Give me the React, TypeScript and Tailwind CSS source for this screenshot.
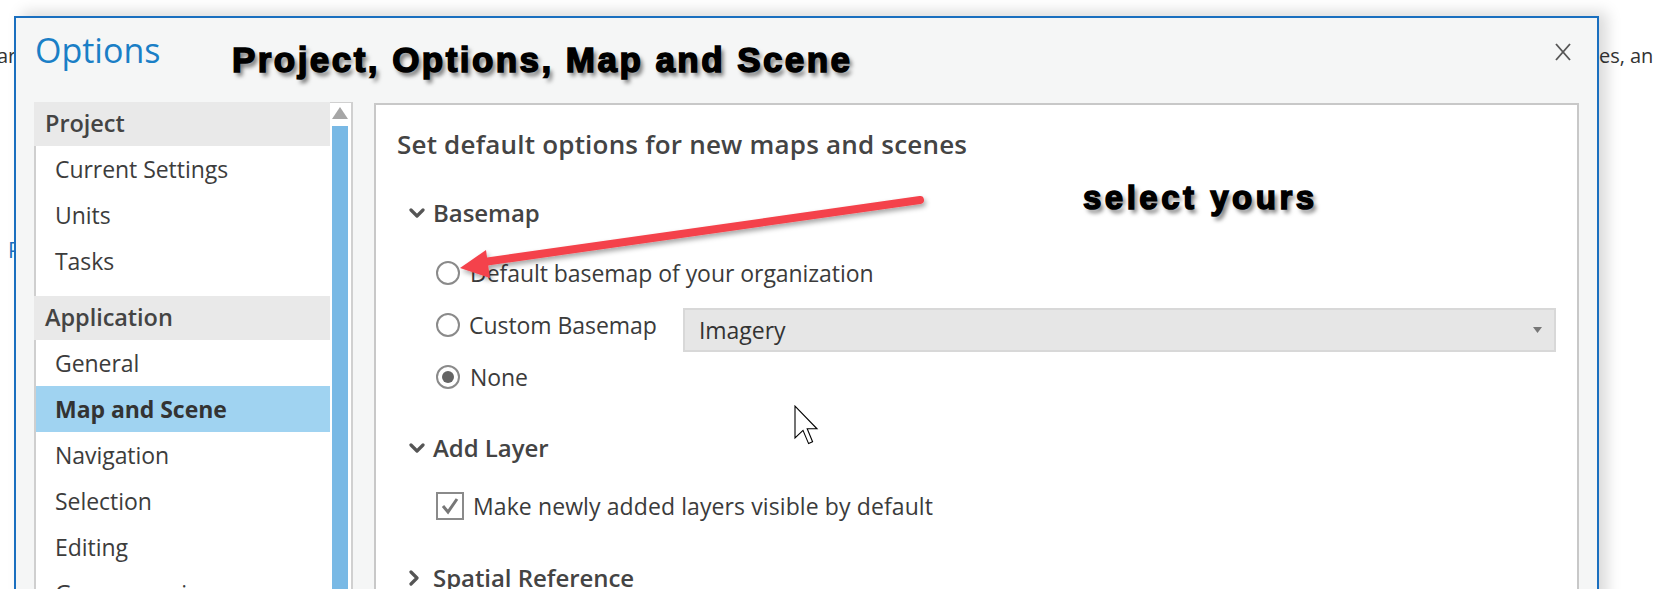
import React from "react";

function ChevronDown() {
  return (
    <svg width="16" height="10" viewBox="0 0 16 10" className="shrink-0">
      <polyline points="2,2 8,8 14,2" fill="none" stroke="#555" strokeWidth="3.2" strokeLinecap="round" strokeLinejoin="round" />
    </svg>
  );
}

function ChevronRight() {
  return (
    <svg width="16" height="16" viewBox="0 0 16 16" className="shrink-0">
      <polyline points="2,2 8,8 2,14" fill="none" stroke="#555" strokeWidth="3.2" strokeLinecap="round" strokeLinejoin="round" />
    </svg>
  );
}

function Radio({ checked }: { checked?: boolean }) {
  return (
    <span className="w-[24px] h-[24px] rounded-full border-2 border-[#8a8a8a] bg-white flex items-center justify-center shrink-0">
      {checked && <span className="w-[12px] h-[12px] rounded-full bg-[#646464]" />}
    </span>
  );
}

function NavHeader({ children }: { children: React.ReactNode }) {
  return (
    <div className="h-[44px] flex items-center pl-[11px] bg-[#e9e9e9] text-[23.5px] font-semibold text-[#444]">
      {children}
    </div>
  );
}

function NavItem({ children, active }: { children: React.ReactNode; active?: boolean }) {
  return (
    <div
      className={
        active
          ? "h-[46px] flex items-center pl-[19px] bg-[#a0d3f1] font-bold text-[#333]"
          : "h-[46px] flex items-center pl-[19px] text-[#3c3c3c]"
      }
    >
      {children}
    </div>
  );
}

export default function App() {
  return (
    <div className="relative w-[1657px] h-[589px] overflow-hidden bg-white font-['Open_Sans','Noto_Sans',sans-serif] text-[23px] tracking-[-0.05px] text-[#3b3b3b]">
      {/* underlying page */}
      <div className="flex flex-col">
        <div className="flex justify-between pt-[42px] text-[20px] leading-[28px] text-[#333]">
          <span className="-ml-[3px]">ar</span>
          <span className="w-[58px] overflow-hidden whitespace-nowrap">es, an</span>
        </div>
        <div className="pt-[166px] pl-[8px] text-[21px] leading-[28px] text-[#1a6fc0]">P</div>
      </div>

      {/* dialog */}
      <div className="absolute left-[14px] top-[16px] w-[1585px] h-[620px] border-2 border-[#1a6fbf] bg-[#f5f6f6] shadow-[8px_-4px_14px_rgba(0,0,0,0.15)] flex flex-col">
        <div className="h-[84px] flex items-start justify-between pl-[19px] pr-[24px] shrink-0">
          <div className="pt-[9px] text-[34px] leading-[46px] tracking-normal text-[#1a7fc6]">Options</div>
          <svg width="20" height="18" viewBox="0 0 20 18" className="mt-[25px]">
            <line x1="3" y1="1" x2="17" y2="17" stroke="#555" strokeWidth="1.8" />
            <line x1="17" y1="1" x2="3" y2="17" stroke="#555" strokeWidth="1.8" />
          </svg>
        </div>

        <div className="flex flex-1 pl-[18px] pr-[18px] gap-[21px]">
          {/* navigation list */}
          <div className="w-[319px] flex shrink-0">
            <div className="w-[296px] flex flex-col">
              <NavHeader>Project</NavHeader>
              <div className="border-l-2 border-[#cfcfcf] bg-white pb-[12px]">
                <NavItem>Current Settings</NavItem>
                <NavItem>Units</NavItem>
                <NavItem>Tasks</NavItem>
              </div>
              <NavHeader>Application</NavHeader>
              <div className="border-l-2 border-[#cfcfcf] bg-white flex-1">
                <NavItem>General</NavItem>
                <NavItem active>Map and Scene</NavItem>
                <NavItem>Navigation</NavItem>
                <NavItem>Selection</NavItem>
                <NavItem>Editing</NavItem>
                <NavItem>Geoprocessing</NavItem>
              </div>
            </div>
            <div className="w-[23px] bg-white border-t border-r-2 border-[#d0d0d0] flex flex-col pl-[2px] pr-[3px] pt-[4px]">
              <svg width="16" height="12" viewBox="0 0 16 12">
                <polygon points="8,0 16,12 0,12" fill="#a6a6a6" />
              </svg>
              <div className="mt-[7px] flex-1 bg-[#79b9e5]" />
            </div>
          </div>

          {/* content panel */}
          <div className="flex-1 mt-[1px] border-2 border-[#c8c8c8] bg-white pl-[21px] pt-[21px]">
            <div className="h-[36px] flex items-center text-[26px] font-semibold tracking-[0.2px] text-[#444]">
              Set default options for new maps and scenes
            </div>

            <div className="mt-[33px] h-[36px] flex items-center pl-[12px] gap-[8px] text-[24px] font-semibold text-[#444]">
              <ChevronDown />
              Basemap
            </div>

            <div className="mt-[16px] pl-[39px] flex flex-col">
              <div className="h-[52px] flex items-center gap-[10px]">
                <Radio />
                <span>Default basemap of your organization</span>
              </div>
              <div className="h-[52px] flex items-center">
                <div className="w-[247px] flex items-center gap-[9px] shrink-0">
                  <Radio />
                  <span>Custom Basemap</span>
                </div>
                <div className="w-[873px] h-[44px] mt-[10px] border-2 border-[#d8d8d8] bg-[#e6e6e6] flex items-center justify-between pl-[14px] pr-[12px] text-[#333]">
                  <span>Imagery</span>
                  <svg width="9" height="6" viewBox="0 0 9 6">
                    <polygon points="0,0 9,0 4.5,6" fill="#777" />
                  </svg>
                </div>
              </div>
              <div className="h-[52px] flex items-center gap-[10px]">
                <Radio checked />
                <span>None</span>
              </div>
            </div>

            <div className="mt-[27px] h-[36px] flex items-center pl-[12px] gap-[8px] text-[24px] font-semibold text-[#444]">
              <ChevronDown />
              Add Layer
            </div>

            <div className="mt-[14px] pl-[39px] h-[52px] flex items-center gap-[9px]">
              <span className="w-[28px] h-[28px] border-2 border-[#8a8a8a] bg-white flex items-center justify-center shrink-0">
                <svg width="20" height="18" viewBox="0 0 20 18">
                  <polyline points="3,9 8,15 17,2" fill="none" stroke="#777" strokeWidth="3" strokeLinejoin="miter" />
                </svg>
              </span>
              <span className="tracking-[0.1px]">Make newly added layers visible by default</span>
            </div>

            <div className="mt-[28px] h-[36px] flex items-center pl-[12px] gap-[8px] text-[24px] font-semibold text-[#444]">
              <ChevronRight />
              Spatial Reference
            </div>
          </div>
        </div>
      </div>

      {/* annotations */}
      <div className="absolute left-[232px] top-[38px] whitespace-nowrap font-['Liberation_Sans',Arial,sans-serif] text-[35px] leading-[44px] font-bold tracking-[2.45px] text-black [-webkit-text-stroke:1.5px_black] [text-shadow:3px_4px_4px_rgba(0,0,0,0.55)]">
        Project, Options, Map and Scene
      </div>
      <div className="absolute left-[1083px] top-[178px] whitespace-nowrap font-['Liberation_Sans',Arial,sans-serif] text-[33px] leading-[40px] font-bold tracking-[3.5px] text-black [-webkit-text-stroke:1.5px_black] [text-shadow:3px_4px_4px_rgba(0,0,0,0.55)]">
        select yours
      </div>

      <svg className="absolute left-0 top-0 pointer-events-none" width="1657" height="589" viewBox="0 0 1657 589">
        <defs>
          <filter id="arrowShadow" x="-10%" y="-50%" width="120%" height="200%">
            <feDropShadow dx="2" dy="3" stdDeviation="2.5" floodColor="#000" floodOpacity="0.35" />
          </filter>
        </defs>
        <g filter="url(#arrowShadow)">
          <line x1="920" y1="200" x2="484" y2="262" stroke="#f4434b" strokeWidth="8" strokeLinecap="round" />
          <polygon points="460,268 490,278 486,250" fill="#f4434b" />
        </g>
      </svg>

      {/* mouse cursor */}
      <svg className="absolute left-[793px] top-[404px] pointer-events-none" width="26" height="42" viewBox="0 0 13 21">
        <path d="M1,1 L1,17 L5,13.2 L7.8,19.8 L9.8,18.9 L7.1,12.4 L12,12.4 Z" fill="white" stroke="black" strokeWidth="0.55" strokeLinejoin="miter" />
      </svg>
    </div>
  );
}
